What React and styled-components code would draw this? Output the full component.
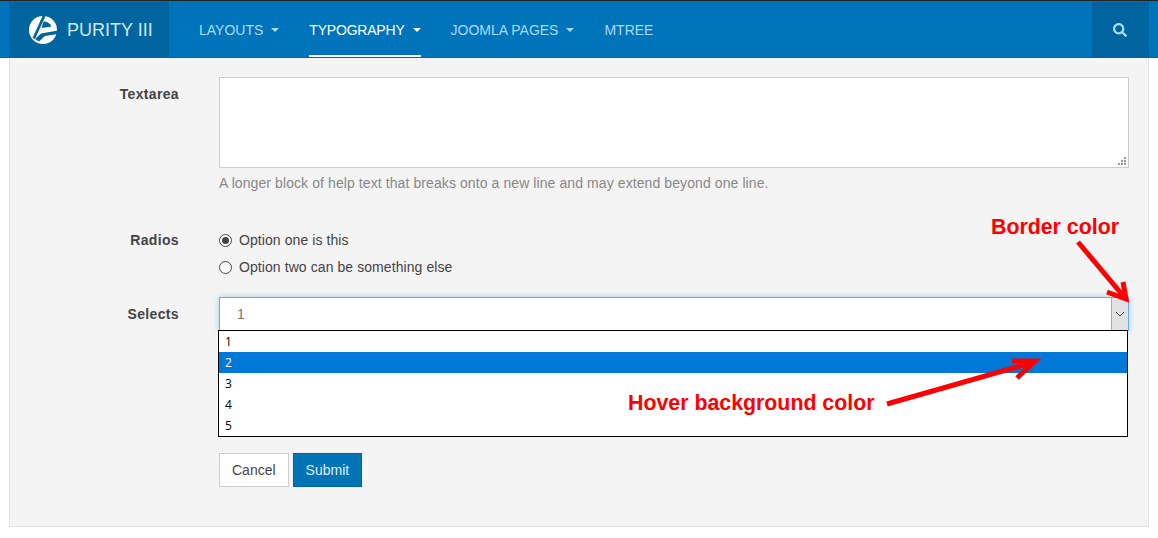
import React from "react";
import styled, { createGlobalStyle } from "styled-components";
import { FaSearch } from "react-icons/fa";

const GlobalStyle = createGlobalStyle`
  html, body {
    margin: 0;
    padding: 0;
    background: #fff;
    font-family: "Liberation Sans", Arial, sans-serif;
    font-size: 14px;
    color: #444;
  }
`;

const Page = styled.div`
  position: relative;
  width: 1158px;
  height: 538px;
  overflow: hidden;
`;

const Navbar = styled.header`
  display: flex;
  height: 58px;
  box-sizing: border-box;
  padding: 1px 9px 0;
  background: #0074bb;
  border-top: 1px solid #222;
  border-bottom: 1px solid #00659e;
`;

const Brand = styled.a`
  display: flex;
  align-items: center;
  gap: 9px;
  width: 160px;
  box-sizing: border-box;
  padding-left: 19px;
  background: #00659e;
  color: #cfe9fa;
  font-size: 18px;
`;

const BrandName = styled.span`
  padding-top: 2px;
`;

const Menu = styled.nav`
  display: flex;
  flex: 1;
  padding-left: 15px;
`;

const MenuItem = styled.a`
  position: relative;
  display: flex;
  align-items: center;
  gap: 8px;
  height: 55px;
  padding: 0 15px;
  color: ${(p) => (p.$active ? "#fff" : "#a9daf7")};
  font-size: 14px;

  ${(p) =>
    p.$active &&
    `
    letter-spacing: -0.2px;

    &::after {
      content: "";
      position: absolute;
      left: 15px;
      right: 15px;
      bottom: 0;
      height: 2px;
      background: #fff;
    }
  `}
`;

const Caret = styled.span`
  width: 0;
  height: 0;
  border-left: 4px solid transparent;
  border-right: 4px solid transparent;
  border-top: 4px solid currentColor;
`;

const SearchButton = styled.button`
  display: flex;
  align-items: flex-start;
  justify-content: center;
  width: 57px;
  padding: 21px 1px 0 0;
  border: 0;
  background: #00659e;
  color: #a9daf7;
  font-size: 14px;
`;

const Panel = styled.main`
  box-sizing: border-box;
  width: 1140px;
  height: 469px;
  margin-left: 9px;
  padding: 19px 19px 0 0;
  background: #f4f4f4;
  border: 1px solid #e3e3e3;
  border-top: 0;
`;

const FormRow = styled.div`
  display: grid;
  grid-template-columns: 169px 1fr;
  column-gap: 40px;
  margin-bottom: ${(p) => p.$gap || 0}px;
`;

const Label = styled.label`
  padding-top: ${(p) => p.$top || 0}px;
  text-align: right;
  font-weight: 700;
  line-height: 20px;
  letter-spacing: 0.35px;
  color: #444;
`;

const TextareaBox = styled.div`
  position: relative;
  height: 91px;
  box-sizing: border-box;
  background: #fff;
  border: 1px solid #ccc;
`;

const Grip = styled.svg`
  position: absolute;
  right: 1px;
  bottom: 1px;
`;

const HelpText = styled.p`
  margin: 5px 0 0;
  line-height: 20px;
  letter-spacing: 0.09px;
  color: #888;
`;

const RadioList = styled.div`
  display: flex;
  flex-direction: column;
  gap: 7px;
`;

const RadioRow = styled.div`
  display: flex;
  align-items: center;
  gap: 7px;
  height: 20px;
  letter-spacing: 0.08px;
  color: #444;
`;

const RadioMark = styled.span`
  position: relative;
  width: 13px;
  height: 13px;
  box-sizing: border-box;
  border: 1px solid #444;
  border-radius: 50%;
  background: #fff;

  ${(p) =>
    p.$checked &&
    `
    &::after {
      content: "";
      position: absolute;
      left: 2px;
      top: 2px;
      width: 7px;
      height: 7px;
      border-radius: 50%;
      background: #444;
    }
  `}
`;

const SelectWrap = styled.div`
  position: relative;
`;

const SelectBox = styled.div`
  display: flex;
  align-items: center;
  justify-content: space-between;
  height: 34px;
  box-sizing: border-box;
  padding-left: 17px;
  background: #fff;
  border: 1px solid #66afe9;
  box-shadow: 0 0 6px rgba(102, 175, 233, 0.6);
  color: #7d6e64;
`;

const SelectArrow = styled.span`
  display: flex;
  align-items: center;
  justify-content: center;
  width: 16px;
  height: 32px;
  background: #e1e1e1;
  border-left: 1px solid #aaa;
`;

const Dropdown = styled.ul`
  position: absolute;
  left: -1px;
  top: 33px;
  width: 910px;
  height: 107px;
  box-sizing: border-box;
  margin: 0;
  padding: 0;
  list-style: none;
  background: #fff;
  border: 1px solid #000;
  font-family: "Open Sans", "Noto Sans", sans-serif;
  font-size: 12px;
`;

const DropdownItem = styled.li`
  height: 21px;
  padding-left: 6px;
  line-height: 21px;
  background: ${(p) => (p.$hover ? "#0078d7" : "#fff")};
  color: ${(p) => (p.$hover ? "#fff" : "#000")};
`;

const Actions = styled.div`
  display: flex;
  gap: 4px;
  margin: 122px 0 0 209px;
`;

const Button = styled.button`
  height: 34px;
  padding: 0 12px;
  box-sizing: border-box;
  font: inherit;
  background: ${(p) => (p.$primary ? "#0074b5" : "#fff")};
  border: 1px solid ${(p) => (p.$primary ? "#00659e" : "#ccc")};
  color: ${(p) => (p.$primary ? "#dff1fc" : "#444")};
`;

const Note = styled.span`
  position: absolute;
  left: ${(p) => p.$x}px;
  top: ${(p) => p.$y}px;
  color: #f00;
  font-size: 21.33px;
  font-weight: 700;
  white-space: nowrap;
`;

const Arrow = styled.svg`
  position: absolute;
  left: 0;
  top: 0;
  pointer-events: none;
`;

const Logo = () => (
  <svg width="30" height="30" viewBox="0 0 30 30">
    <circle cx="15" cy="15" r="14" fill="#fff" />
    <path d="M15 0 L18 0 L7 24 L4.5 23 Z" fill="#00659e" />
    <path d="M15.5 6.5 A9 9 0 0 1 23.5 11.5 L13.5 13 Z" fill="#00659e" />
    <path d="M7 24 L13 18.5 L30 15.5 L30 19 L17 21 L11 26.5 Z" fill="#00659e" />
  </svg>
);

const options = ["1", "2", "3", "4", "5"];

export default function App() {
  return (
    <Page>
      <GlobalStyle />
      <Navbar>
        <Brand>
          <Logo />
          <BrandName>PURITY III</BrandName>
        </Brand>
        <Menu>
          <MenuItem>
            LAYOUTS <Caret />
          </MenuItem>
          <MenuItem $active>
            TYPOGRAPHY <Caret />
          </MenuItem>
          <MenuItem>
            JOOMLA PAGES <Caret />
          </MenuItem>
          <MenuItem>MTREE</MenuItem>
        </Menu>
        <SearchButton>
          <FaSearch />
        </SearchButton>
      </Navbar>

      <Panel>
        <FormRow $gap={37}>
          <Label $top={7}>Textarea</Label>
          <div>
            <TextareaBox>
              <Grip width="11" height="11" viewBox="0 0 11 11" fill="#999">
                <rect x="8" y="2" width="2" height="2" />
                <rect x="5" y="5" width="2" height="2" />
                <rect x="8" y="5" width="2" height="2" />
                <rect x="2" y="8" width="2" height="2" />
                <rect x="5" y="8" width="2" height="2" />
                <rect x="8" y="8" width="2" height="2" />
              </Grip>
            </TextareaBox>
            <HelpText>
              A longer block of help text that breaks onto a new line and may
              extend beyond one line.
            </HelpText>
          </div>
        </FormRow>

        <FormRow $gap={20}>
          <Label>Radios</Label>
          <RadioList>
            <RadioRow>
              <RadioMark $checked />
              Option one is this
            </RadioRow>
            <RadioRow>
              <RadioMark />
              Option two can be something else
            </RadioRow>
          </RadioList>
        </FormRow>

        <FormRow>
          <Label $top={7}>Selects</Label>
          <SelectWrap>
            <SelectBox>
              1
              <SelectArrow>
                <svg width="10" height="6" viewBox="0 0 10 6" fill="none" stroke="#444" strokeWidth="1">
                  <path d="M1 1 L5 5 L9 1" />
                </svg>
              </SelectArrow>
            </SelectBox>
            <Dropdown>
              {options.map((o) => (
                <DropdownItem key={o} $hover={o === "2"}>
                  {o}
                </DropdownItem>
              ))}
            </Dropdown>
          </SelectWrap>
        </FormRow>

        <Actions>
          <Button>Cancel</Button>
          <Button $primary>Submit</Button>
        </Actions>
      </Panel>

      <Note $x={991} $y={215}>Border color</Note>
      <Note $x={628} $y={391}>Hover background color</Note>
      <Arrow width="1158" height="538" viewBox="0 0 1158 538" fill="none" stroke="#f00" strokeWidth="5">
        <path d="M1078 242 L1125 298" />
        <path d="M1107 292 L1126 299 L1123 282" />
        <path d="M887 404 L1034 362" />
        <path d="M1012 361 L1035 361 L1017 378" />
      </Arrow>
    </Page>
  );
}
